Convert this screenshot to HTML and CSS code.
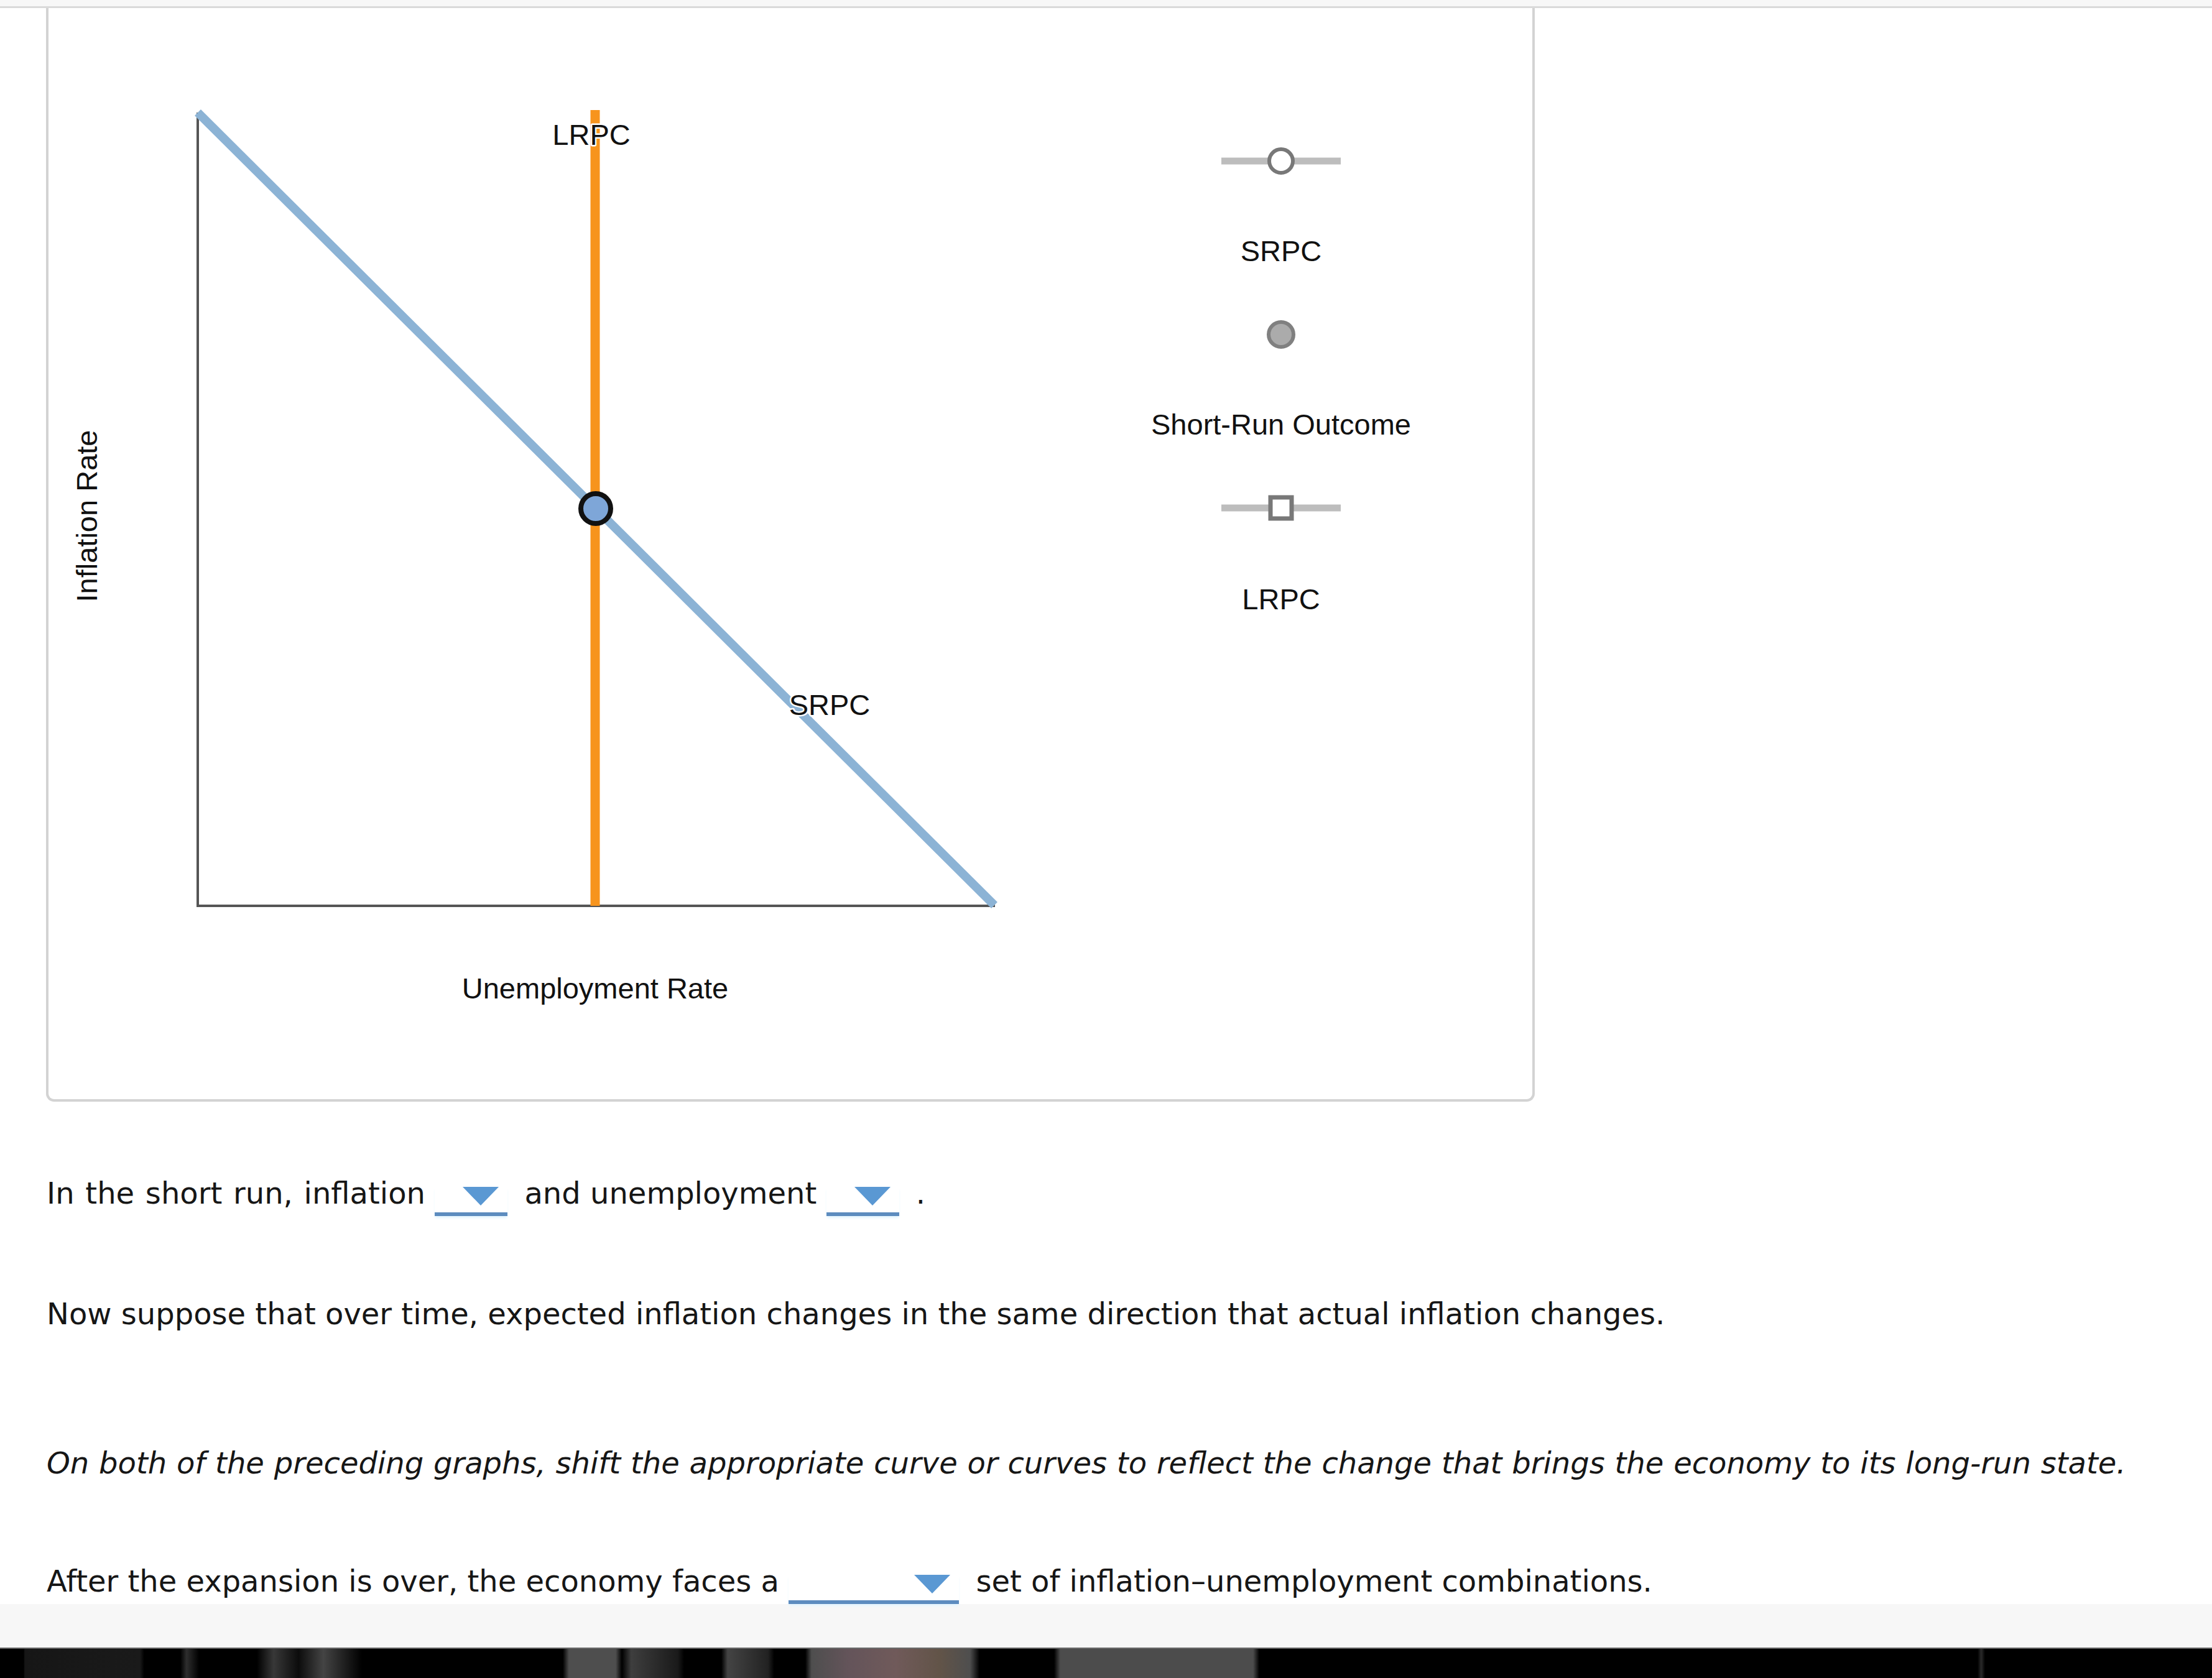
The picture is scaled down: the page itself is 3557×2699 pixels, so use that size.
FILE: index.html
```html
<!DOCTYPE html>
<html>
<head>
<meta charset="utf-8">
<title>Phillips Curve</title>
<link rel="stylesheet" href="styles.css">
</head>
<body>
<div class="topbar"></div>
<div class="card">
  <svg class="graph" width="2386" height="1755" viewBox="78 13 2386 1755" xmlns="http://www.w3.org/2000/svg">
    <polyline points="318,181 318,1457 1600,1457" fill="none" stroke="#555" stroke-width="4"/>
    <line x1="318" y1="181" x2="1599" y2="1456" stroke="#8cb3d5" stroke-width="14"/>
    <line x1="957" y1="177" x2="957" y2="1457" stroke="#f7941d" stroke-width="15"/>
    <text class="lbl halo" x="951" y="233" text-anchor="middle">LRPC</text>
    <text class="lbl halo" x="1334" y="1150" text-anchor="middle">SRPC</text>
    <circle cx="958" cy="818" r="24" fill="#7ea6d8" stroke="#111" stroke-width="8"/>
    <text class="lbl" x="957" y="1606" text-anchor="middle">Unemployment Rate</text>
    <text class="lbl" transform="translate(156 830) rotate(-90)" text-anchor="middle">Inflation Rate</text>

    <line x1="1964" y1="259" x2="2156" y2="259" stroke="#bdbdbd" stroke-width="11"/>
    <circle cx="2060" cy="259" r="19" fill="#fff" stroke="#787878" stroke-width="6"/>
    <text class="lbl" x="2060" y="420" text-anchor="middle">SRPC</text>

    <circle cx="2060" cy="538" r="20" fill="#ababab" stroke="#808080" stroke-width="6"/>
    <text class="lbl" x="2060" y="699" text-anchor="middle">Short-Run Outcome</text>

    <line x1="1964" y1="817" x2="2156" y2="817" stroke="#bdbdbd" stroke-width="11"/>
    <rect x="2043" y="800" width="34" height="34" fill="#fff" stroke="#787878" stroke-width="7"/>
    <text class="lbl" x="2060" y="980" text-anchor="middle">LRPC</text>
  </svg>
</div>

<div class="questions">
  <p class="q q1"><span class="lead">In the short run, inflation</span> <span class="dd"><span class="tri"></span></span> and unemployment <span class="dd"><span class="tri"></span></span> .</p>
  <p class="q q2">Now suppose that over time, expected inflation changes in the same direction that actual inflation changes.</p>
  <p class="q q3 ital">On both of the preceding graphs, shift the appropriate curve or curves to reflect the change that brings the economy to its long-run state.</p>
  <p class="q q4">After the expansion is over, the economy faces a <span class="dd wide"><span class="tri"></span></span> set of inflation&#8211;unemployment combinations.</p>
</div>

<div class="band"></div>
<div class="dark"></div>
</body>
</html>
```

FILE: styles.css
```css
html, body {
  margin: 0;
  padding: 0;
  background: #ffffff;
}

body {
  width: 3557px;
  height: 2699px;
  overflow: hidden;
  font-family: "DejaVu Sans", Verdana, sans-serif;
  color: #161616;
}

.topbar {
  height: 10px;
  background: #f7f7f7;
  border-bottom: 3px solid #dadada;
}

.card {
  box-sizing: border-box;
  width: 2394px;
  height: 1759px;
  margin-left: 74px;
  border: 4px solid #d3d3d3;
  border-top: none;
  border-radius: 0 0 13px 13px;
  background: #fff;
}

.graph {
  display: block;
}

.lbl {
  font-family: "Liberation Sans", Arial, sans-serif;
  font-size: 47px;
  fill: #111;
}

.halo {
  paint-order: stroke;
  stroke: #fff;
  stroke-width: 5px;
  stroke-linejoin: round;
}

.questions {
  padding-left: 75px;
}

.q {
  margin: 0;
  font-size: 48px;
  line-height: 72px;
  white-space: nowrap;
}

.q1 { margin-top: 111px; }
.q2 { margin-top: 121px; }
.q3 { margin-top: 168px; }
.q4 { margin-top: 119px; line-height: 70px; }

.lead {
  word-spacing: 2.5px;
}

.ital {
  font-style: italic;
  word-spacing: 0.6px;
}

.dd {
  display: inline-block;
  box-sizing: border-box;
  width: 117px;
  height: 47px;
  padding-right: 14px;
  margin-right: 12px;
  overflow: hidden;
  border-bottom: 6px solid #5d8cbf;
  box-shadow: 0 4px 4px -1px #e3f5ff;
  vertical-align: -20px;
}

.dd.wide {
  width: 274px;
}

.tri {
  display: block;
  width: 0;
  height: 0;
  margin-left: auto;
  border-left: 29px solid transparent;
  border-right: 29px solid transparent;
  border-top: 30px solid #5a98d3;
}

.band {
  height: 70px;
  background: #f7f7f7;
  border-bottom: 2px solid #6a6a6a;
}

.dark {
  height: 60px;
  background:
    linear-gradient(90deg,
      #000 0px, #000 38px,
      #161616 40px, #1a1a1a 225px,
      #000 232px, #000 290px,
      #2e2e2e 300px, #000 320px,
      #000 413px, #383838 440px, #0c0c0c 480px, #444 520px, #000 582px,
      #000 905px, #4e4e4e 915px, #4e4e4e 990px,
      #000 1000px, #3e3e3e 1015px, #1a1a1a 1090px,
      #000 1100px, #000 1160px, #444 1170px, #222 1235px,
      #000 1245px, #000 1295px, #4e4e4e 1305px, #64545a 1365px, #705a5a 1440px, #625448 1510px, #4e4e4e 1560px,
      #000 1575px, #000 1695px, #4c4c4c 1705px, #4c4c4c 2015px,
      #000 2025px, #000 3180px, #2a2a2a 3186px, #000 3192px, #000 3557px);
}
```
